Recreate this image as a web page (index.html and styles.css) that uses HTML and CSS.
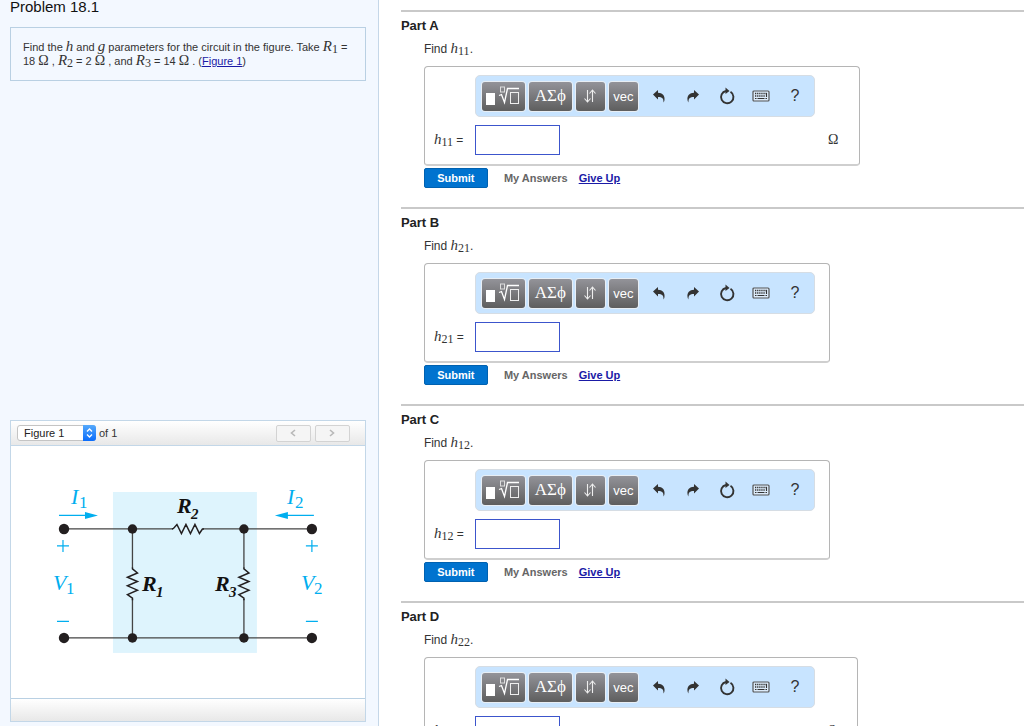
FILE: index.html
```html
<!DOCTYPE html>
<html lang="en">
<head>
  <meta charset="UTF-8">
  <meta name="viewport" content="width=device-width, initial-scale=1.0">
  <title>Problem 18.1</title>
  <link rel="stylesheet" href="styles.css">
</head>
<body>
  <!-- shared icons -->
  <svg class="sprite" aria-hidden="true">
    <symbol id="i-root" viewBox="0 0 36 20">
      <rect x="1" y="7" width="9" height="12" fill="#fff"/>
      <path d="M14 9.500l2.500-1L19.500 16.500 22.500 2.500H34" fill="none" stroke="#fff" stroke-width="1.300"/>
      <rect x="15.500" y="1" width="4" height="5" fill="none" stroke="#ddd"/>
      <rect x="25.500" y="6.500" width="8" height="11" fill="none" stroke="#eee"/>
    </symbol>
    <symbol id="i-arrows" viewBox="0 0 14 16">
      <path d="M4.500 2v12M1.500 10.500l3 3.500 3-3.500M9.500 14V2M6.500 5.500l3-3.500 3 3.500" fill="none" stroke="#eee" stroke-width="1.100"/>
    </symbol>
    <symbol id="i-undo" viewBox="0 0 14 14">
      <path d="M1 5.500L6 1v2.800c4.500.2 7 2.700 6.500 7.200-.1 1-.4 1.800-1 2.500.3-3.600-1.300-5.400-5.500-5.400V10.500z" fill="#333"/>
    </symbol>
    <symbol id="i-redo" viewBox="0 0 14 14">
      <path d="M13 5.500L8 1v2.800C3.500 4 1 6.500 1.500 11c.1 1 .4 1.800 1 2.500C2.200 9.900 3.800 8.100 8 8.100V10.500z" fill="#333"/>
    </symbol>
    <symbol id="i-reset" viewBox="0 0 16 18">
      <path d="M11.500 4.800A6.200 6.200 0 1 1 7 4" fill="none" stroke="#333" stroke-width="1.900"/>
      <path d="M6.500 0.500L10.500 4 6.500 7z" fill="#333"/>
    </symbol>
    <symbol id="i-keyboard" viewBox="0 0 18 12">
      <rect x="1" y="1" width="16" height="10" rx="1" fill="#dcebfa" stroke="#555" stroke-width="1.200"/>
      <path d="M3 3.500h12M3 6h10" stroke="#333" stroke-width="1.300" stroke-dasharray="1.300 .8"/>
      <path d="M14.500 3v4M3 8.500h1.500M5.500 8.500h7M13.500 8.500H15" stroke="#333" stroke-width="1.100"/>
    </symbol>
  </svg>

  <div class="page">
    <aside class="sidebar">
      <h1>Problem 18.1</h1>
      <div class="problem">
        Find the <i>h</i> and <i>g</i> parameters for the circuit in the figure. Take <i>R</i><sub>1</sub>
        = 18 <b>Ω</b> , <i>R</i><sub>2</sub> = 2 <b>Ω</b> , and <i>R</i><sub>3</sub> = 14 <b>Ω</b> . (<a href="#figure">Figure 1</a>)
      </div>

      <section class="figure" id="figure">
        <div class="figure-head">
          <span class="picker">
            <select id="figureSelect" aria-label="Figure"><option>Figure 1</option></select>
            <svg class="picker-arrows" viewBox="0 0 13 15" aria-hidden="true"><path d="M4 6l2.500-2.500L9 6M4 9l2.500 2.500L9 9" fill="none" stroke="#fff" stroke-width="1.300"/></svg>
          </span>
          <label for="figureSelect">of 1</label>
          <div class="pager">
            <button type="button" aria-label="Previous figure"><svg width="8" height="8" viewBox="0 0 8 8"><path d="M6 1L2.500 4 6 7" fill="none" stroke="#b8b8b8" stroke-width="1.600"/></svg></button>
            <button type="button" aria-label="Next figure"><svg width="8" height="8" viewBox="0 0 8 8"><path d="M2 1L5.500 4 2 7" fill="none" stroke="#b8b8b8" stroke-width="1.600"/></svg></button>
          </div>
        </div>
        <svg class="circuit" viewBox="0 0 354 252" role="img" aria-label="Circuit with resistors R1, R2 and R3">
          <rect x="102" y="46" width="144" height="161" fill="#def4fd"/>
          <!-- wires and resistors -->
          <g fill="none" stroke="#444" stroke-width="1.300">
            <path d="M53 83H162M192 83H301M53 192H301"/>
            <path d="M121.500 83V122M121.500 153V192M233 83V122M233 153V192"/>
          </g>
          <g fill="none" stroke="#231f20" stroke-width="1.500">
            <path d="M161 83l1.500-.500L166 78.500l4.500 9L175 78.500l4.500 9L184 78.500l4.500 9L191.500 83h1.500"/>
            <path d="M121.500 121.500V123l5 4-10 4.300 10 4.300-10 4.300 10 4.300-10 4.500 5 3.500v2"/>
            <path d="M233 121.500V123l5 4-10 4.300 10 4.300-10 4.300 10 4.300-10 4.500 5 3.500v2"/>
          </g>
          <g fill="#231f20">
            <circle cx="53" cy="83" r="5.200"/><circle cx="121.500" cy="83" r="4.700"/>
            <circle cx="233" cy="83" r="4.700"/><circle cx="301" cy="83" r="5.200"/>
            <circle cx="53" cy="192" r="5.200"/><circle cx="121.500" cy="192" r="4.700"/>
            <circle cx="233" cy="192" r="4.700"/><circle cx="301" cy="192" r="5.200"/>
          </g>
          <!-- currents and polarity -->
          <g stroke="#00aeef" stroke-width="1.200" fill="none">
            <path d="M48 69.500H76M276 69.500H303M46 100h12M52 94v12M295 100h12M301 94v12M46 175.500h12M295 175.500h12"/>
          </g>
          <path d="M74 66l13 3.500-13 3.500zM277 66l-13 3.500 13 3.500z" fill="#00aeef"/>
          <g class="signal">
            <text x="60" y="58">I</text><text class="num" x="68" y="62">1</text>
            <text x="276" y="58">I</text><text class="num" x="284" y="62">2</text>
            <text x="42" y="144">V</text><text class="num" x="55" y="148">1</text>
            <text x="290" y="144">V</text><text class="num" x="303" y="148">2</text>
          </g>
          <g class="part-name">
            <text x="166" y="67">R</text><text class="num" x="180" y="73">2</text>
            <text x="131" y="145">R</text><text class="num" x="145" y="151">1</text>
            <text x="204" y="145">R</text><text class="num" x="218" y="151">3</text>
          </g>
        </svg>
        <div class="figure-foot"></div>
      </section>
    </aside>

    <main class="parts">
      <section class="part">
        <h2>Part A</h2>
        <div class="part-body">
          <p>Find <i>h</i><sub>11</sub>.</p>
          <div class="answer">
            <div class="toolbar">
              <button type="button" class="key wide" aria-label="Templates"><svg width="36" height="20"><use href="#i-root"/></svg></button>
              <button type="button" class="key wide greek">ΑΣϕ</button>
              <button type="button" class="key" aria-label="Arrows"><svg width="14" height="16"><use href="#i-arrows"/></svg></button>
              <button type="button" class="key">vec</button>
              <div class="tools">
                <button type="button" aria-label="Undo"><svg width="14" height="14"><use href="#i-undo"/></svg></button>
                <button type="button" aria-label="Redo"><svg width="14" height="14"><use href="#i-redo"/></svg></button>
                <button type="button" aria-label="Reset"><svg width="16" height="18"><use href="#i-reset"/></svg></button>
                <button type="button" aria-label="Keyboard"><svg width="18" height="12"><use href="#i-keyboard"/></svg></button>
                <button type="button">?</button>
              </div>
            </div>
            <label for="h11"><i>h</i><sub>11</sub> =</label>
            <input type="text" id="h11">
            <span class="unit">Ω</span>
          </div>
          <div class="actions">
            <button type="submit">Submit</button>
            <span>My Answers</span>
            <a href="#">Give Up</a>
          </div>
        </div>
      </section>

      <section class="part">
        <h2>Part B</h2>
        <div class="part-body">
          <p>Find <i>h</i><sub>21</sub>.</p>
          <div class="answer">
            <div class="toolbar">
              <button type="button" class="key wide" aria-label="Templates"><svg width="36" height="20"><use href="#i-root"/></svg></button>
              <button type="button" class="key wide greek">ΑΣϕ</button>
              <button type="button" class="key" aria-label="Arrows"><svg width="14" height="16"><use href="#i-arrows"/></svg></button>
              <button type="button" class="key">vec</button>
              <div class="tools">
                <button type="button" aria-label="Undo"><svg width="14" height="14"><use href="#i-undo"/></svg></button>
                <button type="button" aria-label="Redo"><svg width="14" height="14"><use href="#i-redo"/></svg></button>
                <button type="button" aria-label="Reset"><svg width="16" height="18"><use href="#i-reset"/></svg></button>
                <button type="button" aria-label="Keyboard"><svg width="18" height="12"><use href="#i-keyboard"/></svg></button>
                <button type="button">?</button>
              </div>
            </div>
            <label for="h21"><i>h</i><sub>21</sub> =</label>
            <input type="text" id="h21">
          </div>
          <div class="actions">
            <button type="submit">Submit</button>
            <span>My Answers</span>
            <a href="#">Give Up</a>
          </div>
        </div>
      </section>

      <section class="part">
        <h2>Part C</h2>
        <div class="part-body">
          <p>Find <i>h</i><sub>12</sub>.</p>
          <div class="answer">
            <div class="toolbar">
              <button type="button" class="key wide" aria-label="Templates"><svg width="36" height="20"><use href="#i-root"/></svg></button>
              <button type="button" class="key wide greek">ΑΣϕ</button>
              <button type="button" class="key" aria-label="Arrows"><svg width="14" height="16"><use href="#i-arrows"/></svg></button>
              <button type="button" class="key">vec</button>
              <div class="tools">
                <button type="button" aria-label="Undo"><svg width="14" height="14"><use href="#i-undo"/></svg></button>
                <button type="button" aria-label="Redo"><svg width="14" height="14"><use href="#i-redo"/></svg></button>
                <button type="button" aria-label="Reset"><svg width="16" height="18"><use href="#i-reset"/></svg></button>
                <button type="button" aria-label="Keyboard"><svg width="18" height="12"><use href="#i-keyboard"/></svg></button>
                <button type="button">?</button>
              </div>
            </div>
            <label for="h12"><i>h</i><sub>12</sub> =</label>
            <input type="text" id="h12">
          </div>
          <div class="actions">
            <button type="submit">Submit</button>
            <span>My Answers</span>
            <a href="#">Give Up</a>
          </div>
        </div>
      </section>

      <section class="part">
        <h2>Part D</h2>
        <div class="part-body">
          <p>Find <i>h</i><sub>22</sub>.</p>
          <div class="answer">
            <div class="toolbar">
              <button type="button" class="key wide" aria-label="Templates"><svg width="36" height="20"><use href="#i-root"/></svg></button>
              <button type="button" class="key wide greek">ΑΣϕ</button>
              <button type="button" class="key" aria-label="Arrows"><svg width="14" height="16"><use href="#i-arrows"/></svg></button>
              <button type="button" class="key">vec</button>
              <div class="tools">
                <button type="button" aria-label="Undo"><svg width="14" height="14"><use href="#i-undo"/></svg></button>
                <button type="button" aria-label="Redo"><svg width="14" height="14"><use href="#i-redo"/></svg></button>
                <button type="button" aria-label="Reset"><svg width="16" height="18"><use href="#i-reset"/></svg></button>
                <button type="button" aria-label="Keyboard"><svg width="18" height="12"><use href="#i-keyboard"/></svg></button>
                <button type="button">?</button>
              </div>
            </div>
            <label for="h22"><i>h</i><sub>22</sub> =</label>
            <input type="text" id="h22">
            <span class="unit">S</span>
          </div>
        </div>
      </section>
    </main>
  </div>
</body>
</html>
```

FILE: styles.css
```css
* {
  box-sizing: border-box;
}
body {
  margin: 0;
  font-family: "Liberation Sans", Arial, sans-serif;
  font-size: 12px;
  color: #333;
  background: #fff;
}
button, input, select {
  font-family: inherit;
  margin: 0;
}
a {
  color: #1a1aa6;
}
i, sub, .problem b {
  font-family: "Liberation Serif", "Times New Roman", serif;
  font-weight: normal;
}
i {
  font-size: 15px;
  line-height: 1px;
}
sub {
  font-size: 12px;
  line-height: 1px;
  vertical-align: -2px;
}
.sprite {
  display: none;
}
.page {
  display: flex;
  height: 100vh;
  overflow: hidden;
}

/* left column */
.sidebar {
  display: flex;
  flex-direction: column;
  width: 37%;
  padding: 0 12px 4px 10px;
  background: #f3f8ff;
  border-right: 1px solid #c5d7e8;
}
.sidebar h1 {
  margin: 0 0 13px;
  font-size: 15px;
  font-weight: normal;
  line-height: 14px;
  color: #111;
}
.problem {
  padding: 12px;
  border: 1px solid #b9d0e3;
  font-size: 11px;
  line-height: 14px;
}
.problem b {
  font-size: 14px;
  line-height: 1px;
}
.figure {
  margin-top: auto;
  border: 1px solid #c3d7e8;
  background: #fff;
}
.figure-head {
  display: flex;
  align-items: center;
  gap: 3px;
  height: 25px;
  padding: 0 15px 0 6px;
  font-size: 11px;
  background: linear-gradient(#fff, #e8e8e8);
  border-bottom: 1px solid #c3d7e8;
}
.picker {
  position: relative;
  width: 79px;
  height: 16px;
}
.picker select {
  appearance: none;
  display: block;
  width: 100%;
  height: 100%;
  padding: 0 0 0 6px;
  border: 1px solid #c4c4c4;
  border-radius: 3px;
  background: #fff;
  font-size: 11px;
  color: #222;
}
.picker-arrows {
  position: absolute;
  top: 0;
  right: 0;
  width: 13px;
  height: 16px;
  border-radius: 0 3px 3px 0;
  background: linear-gradient(#55a9fb, #0a6cfb);
}
.pager {
  display: flex;
  gap: 4px;
  margin-left: auto;
}
.pager button {
  display: flex;
  align-items: center;
  justify-content: center;
  width: 35px;
  height: 17px;
  padding: 0;
  border: 1px solid #d3d3d3;
  border-radius: 2px;
  background: #f5f5f5;
}
.circuit {
  display: block;
  width: 100%;
}
.circuit text {
  font-family: "Liberation Serif", "Times New Roman", serif;
  font-style: italic;
}
.signal text {
  font-size: 22px;
  fill: #00aeef;
}
.signal .num {
  font-size: 17px;
  font-style: normal;
}
.part-name text {
  font-size: 22px;
  font-weight: bold;
  fill: #111;
}
.part-name .num {
  font-size: 15px;
}
.figure-foot {
  height: 23px;
  border-top: 1px solid #b9d0e3;
  background: linear-gradient(#fff, #e8e8e8);
}

/* right column */
.parts {
  flex: 1;
  padding: 10px 0 0 22px;
}
.part {
  height: 197px;
  padding-top: 6px;
  border-top: 2px solid #c9c9c9;
}
.part h2 {
  margin: 0;
  font-size: 13px;
  line-height: 16px;
  color: #222;
}
.part-body {
  padding-left: 23px;
}
.part p {
  margin: 0;
  padding: 6px 0 8px;
  line-height: 18px;
}
.answer {
  display: inline-grid;
  grid-template-columns: 41px 340px auto;
  row-gap: 8px;
  align-items: center;
  padding: 8px 14px 9px 9px;
  border: 1px solid #b5b5b5;
  border-bottom: 2px solid #cfcfcf;
  border-radius: 4px;
  vertical-align: top;
}
.toolbar {
  grid-column: 2;
  display: flex;
  align-items: center;
  gap: 4px;
  height: 42px;
  padding: 0 2px 0 6px;
  border: 1px solid #d6dde4;
  border-radius: 5px;
  background: #c8e4ff;
}
.key {
  display: flex;
  align-items: center;
  justify-content: center;
  width: 29px;
  height: 29px;
  padding: 0;
  border: 0;
  border-radius: 3px;
  background: linear-gradient(#939399, #5e5e5e);
  box-shadow: 0 0 0 1px #e8eef4;
  color: #fff;
  font-size: 13px;
}
.key.wide {
  width: 43px;
}
.key.greek {
  font-family: "Liberation Serif", "Times New Roman", serif;
  font-size: 17px;
}
.tools {
  flex: 1;
  display: flex;
}
.tools button {
  flex: 1;
  display: flex;
  align-items: center;
  justify-content: center;
  height: 29px;
  padding: 0;
  border: 0;
  background: none;
  color: #333;
  font-size: 16px;
}
.answer label {
  grid-column: 1;
}
.answer input {
  width: 85px;
  height: 30px;
  border: 1px solid #3c55cc;
  background: #fff;
}
.unit {
  padding: 0 7px 0 13px;
  font-family: "Liberation Serif", "Times New Roman", serif;
  font-size: 14px;
}
.actions {
  display: flex;
  align-items: center;
  padding-top: 2px;
  font-size: 11px;
  font-weight: bold;
}
.actions button {
  width: 64px;
  height: 20px;
  padding: 0;
  border: 1px solid #0061b0;
  border-radius: 2px;
  background: #0073cf;
  color: #fff;
  font-size: 11px;
  font-weight: bold;
}
.actions span {
  margin: 0 11px 0 16px;
  color: #666;
}
```
